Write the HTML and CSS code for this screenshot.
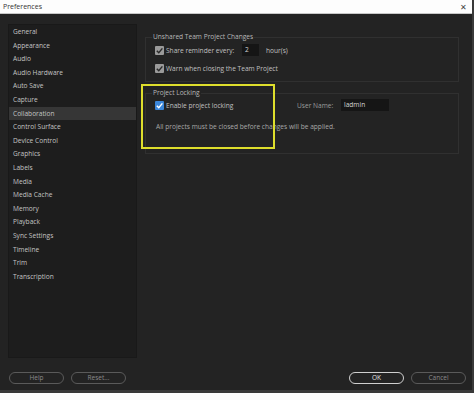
FILE: index.html
```html
<!DOCTYPE html>
<html>
<head>
<meta charset="utf-8">
<link rel="stylesheet" href="styles.css">
</head>
<body>
<div class="window">
  <div class="titlebar">
    <span class="title">Preferences</span>
    <span class="close">✕</span>
  </div>
  <div class="dialog">
    <div class="main">
      <ul class="sidebar">
        <li>General</li>
        <li>Appearance</li>
        <li>Audio</li>
        <li>Audio Hardware</li>
        <li>Auto Save</li>
        <li>Capture</li>
        <li class="selected">Collaboration</li>
        <li>Control Surface</li>
        <li>Device Control</li>
        <li>Graphics</li>
        <li>Labels</li>
        <li>Media</li>
        <li>Media Cache</li>
        <li>Memory</li>
        <li>Playback</li>
        <li>Sync Settings</li>
        <li>Timeline</li>
        <li>Trim</li>
        <li>Transcription</li>
      </ul>
      <div class="content">
        <fieldset class="group group-unshared">
          <legend>Unshared Team Project Changes</legend>
          <div class="row">
            <span class="check grey"><svg viewBox="0 0 10 10"><path d="M2 5.2 L4.2 7.4 L8.2 2.6" /></svg></span>
            <span class="label share">Share reminder every:</span>
            <span class="input small">2</span>
            <span class="label unit">hour(s)</span>
          </div>
          <div class="row">
            <span class="check grey"><svg viewBox="0 0 10 10"><path d="M2 5.2 L4.2 7.4 L8.2 2.6" /></svg></span>
            <span class="label">Warn when closing the Team Project</span>
          </div>
        </fieldset>
        <fieldset class="group group-locking">
          <legend>Project Locking</legend>
          <div class="row lock-row">
            <span class="check blue"><svg viewBox="0 0 10 10"><path d="M2 5.2 L4.2 7.4 L8.2 2.6" /></svg></span>
            <span class="label enable">Enable project locking</span>
            <span class="label user">User Name:</span>
            <span class="input name">ladmin</span>
          </div>
          <div class="note">All projects must be closed before changes will be applied.</div>
        </fieldset>
      </div>
    </div>
    <div class="footer">
      <div class="btns">
        <span class="btn">Help</span>
        <span class="btn">Reset...</span>
      </div>
      <div class="btns">
        <span class="btn primary">OK</span>
        <span class="btn">Cancel</span>
      </div>
    </div>
    <div class="highlight"></div>
  </div>
</div>
</body>
</html>
```
FILE: styles.css
```css
* { box-sizing: border-box; }
html, body { margin: 0; padding: 0; }
body {
  width: 474px;
  height: 393px;
  overflow: hidden;
  background: #232323;
  font-family: "Open Sans", "Noto Sans", sans-serif;
  font-size: 6.6px;
  color: #bdbdbd;
}
.window {
  width: 474px;
  height: 393px;
  display: flex;
  flex-direction: column;
  border-right: 2px solid #3a3a3a;
  border-bottom: 3px solid #3a3a3a;
}
.titlebar {
  height: 14px;
  flex: none;
  background: #fdfdfd;
  border-bottom: 1px solid #c8c8c8;
  display: flex;
  align-items: center;
  justify-content: space-between;
  padding: 0 5px 0 3px;
  color: #333;
  font-size: 7px;
}
.close { font-size: 8px; color: #444; }
.dialog {
  position: relative;
  flex: 1;
  display: flex;
  flex-direction: column;
  background: #232323;
}
.main {
  display: flex;
  padding: 10px 0 0 8px;
  flex: none;
}
.sidebar {
  list-style: none;
  margin: 0;
  padding: 0;
  width: 129px;
  height: 334px;
  background: #1d1d1d;
  border: 1px solid #191919;
}
.sidebar li {
  height: 13.6px;
  line-height: 13.6px;
  padding-left: 4px;
  color: #c4c4c4;
}
.sidebar li.selected { background: #363636; }
.content {
  flex: 1;
  padding: 8px 13px 0 8px;
  display: flex;
  flex-direction: column;
}
.group {
  margin: 0;
  border: 1px solid #303030;
  padding: 0 0 0 9px;
  min-width: 0;
}
.group legend {
  padding: 0 1px;
  margin-left: -3px;
  color: #b8b8b8;
  font-size: 6.6px;
  line-height: 10px;
}
.group-unshared { height: 50px; }
.group-locking { height: 66px; margin-top: 6px; }
.row {
  display: flex;
  align-items: center;
  height: 18px;
}
.group-unshared .row:first-of-type { margin-top: -1px; }
.check {
  width: 9px;
  height: 9px;
  border-radius: 1px;
  display: inline-flex;
  margin-right: 2px;
  flex: none;
}
.check svg { width: 9px; height: 9px; }
.check path { fill: none; stroke-width: 1.6; }
.check.grey { background: #9a9a9a; }
.check.grey path { stroke: #2a2a2a; }
.check.blue { background: #3b86d9; }
.check.blue path { stroke: #fff; }
.label { color: #c0c0c0; }
.label.share { width: 76px; }
.label.enable { width: 131px; }
.input {
  background: #151515;
  height: 12px;
  line-height: 12px;
  padding-left: 3px;
  color: #d6d6d6;
}
.input.small { width: 17px; }
.unit { margin-left: 7px; }
.user { color: #9c9c9c; width: 44px; }
.input.name { width: 48px; }
.lock-row { margin-top: -2px; }
.note { margin-top: 8px; padding-left: 1px; color: #a8a8a8; }
.footer {
  flex: 1;
  display: flex;
  justify-content: space-between;
  padding: 14px 6px 0 9px;
}
.btns { display: flex; gap: 7px; }
.btn {
  width: 55px;
  height: 12px;
  border: 1.5px solid #5a5a5a;
  border-radius: 7px;
  text-align: center;
  line-height: 9px;
  font-size: 6.5px;
  color: #8a8a8a;
}
.btn.primary { border-color: #cfcfcf; color: #e0e0e0; }
.highlight {
  position: absolute;
  left: 141px;
  top: 70px;
  width: 134px;
  height: 65px;
  border: 2px solid #dede2c;
}
```
